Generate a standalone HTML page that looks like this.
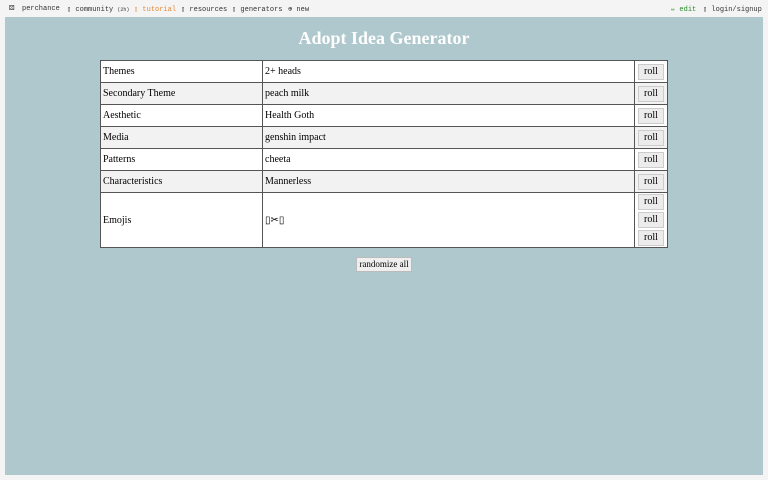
<!DOCTYPE html>
<html><head><style>
html,body{margin:0;padding:0;width:768px;height:480px;background:#f4f4f4;overflow:hidden;font-family:"Liberation Serif",serif;}
.nav{position:absolute;top:0;left:0;right:0;height:17px;font-family:"Liberation Mono",monospace;font-size:7px;color:#333;}
.nav span{position:absolute;top:5px;white-space:nowrap}
.panel{position:absolute;left:5px;top:17px;width:758px;height:458px;background:#afc8cd;}
h1{position:absolute;top:28px;left:0;width:768px;text-align:center;margin:0;font-size:18px;font-weight:bold;color:#fff;}
table{position:absolute;left:100px;top:60px;width:568px;border-collapse:collapse;font-size:10px;}
td{border:1px solid #555;padding:0 2px;height:21px;color:#000;}
tr:nth-child(even) td{background:#f2f2f2}
tr:nth-child(odd) td{background:#fff}
td.c1{width:157px}td.c3{width:32px;text-align:center;padding:0}
.b{display:inline-block;width:24px;height:14px;line-height:14px;background:#ececec;border:1px solid #ccc;font-size:10px;text-align:center;margin:1px 0}
.rand{position:absolute;left:356px;top:257px;width:54px;height:13px;line-height:13px;background:#efefef;border:1px solid #bbb;font-size:9px;text-align:center}
</style></head><body>
<div class="nav">
<span style="left:9px;top:3px;font-size:9px">⚄</span>
<span style="left:22px">perchance</span>
<span style="left:67px">▯ community <small style="font-size:5px">(2h)</small></span>
<span style="left:134px;color:#e08a3a">▯ tutorial</span>
<span style="left:181px">▯ resources</span>
<span style="left:232px">▯ generators</span>
<span style="left:288px">⊕ new</span>
<span style="left:671px;color:#2a8a2a">✏ edit</span>
<span style="left:703px">▯ login/signup</span>
</div>
<div class="panel"></div>
<h1>Adopt Idea Generator</h1>
<table>
<tr><td class="c1">Themes</td><td>2+ heads</td><td class="c3"><span class="b">roll</span></td></tr>
<tr><td class="c1">Secondary Theme</td><td>peach milk</td><td class="c3"><span class="b">roll</span></td></tr>
<tr><td class="c1">Aesthetic</td><td>Health Goth</td><td class="c3"><span class="b">roll</span></td></tr>
<tr><td class="c1">Media</td><td>genshin impact</td><td class="c3"><span class="b">roll</span></td></tr>
<tr><td class="c1">Patterns</td><td>cheeta</td><td class="c3"><span class="b">roll</span></td></tr>
<tr><td class="c1">Characteristics</td><td>Mannerless</td><td class="c3"><span class="b">roll</span></td></tr>
<tr style="height:55px"><td class="c1" style="background:#fff">Emojis</td><td style="background:#fff">▯✂▯</td><td class="c3" style="background:#fff"><span class="b">roll</span><br><span class="b">roll</span><br><span class="b">roll</span></td></tr>
</table>
<div class="rand">randomize all</div>
</body></html>
